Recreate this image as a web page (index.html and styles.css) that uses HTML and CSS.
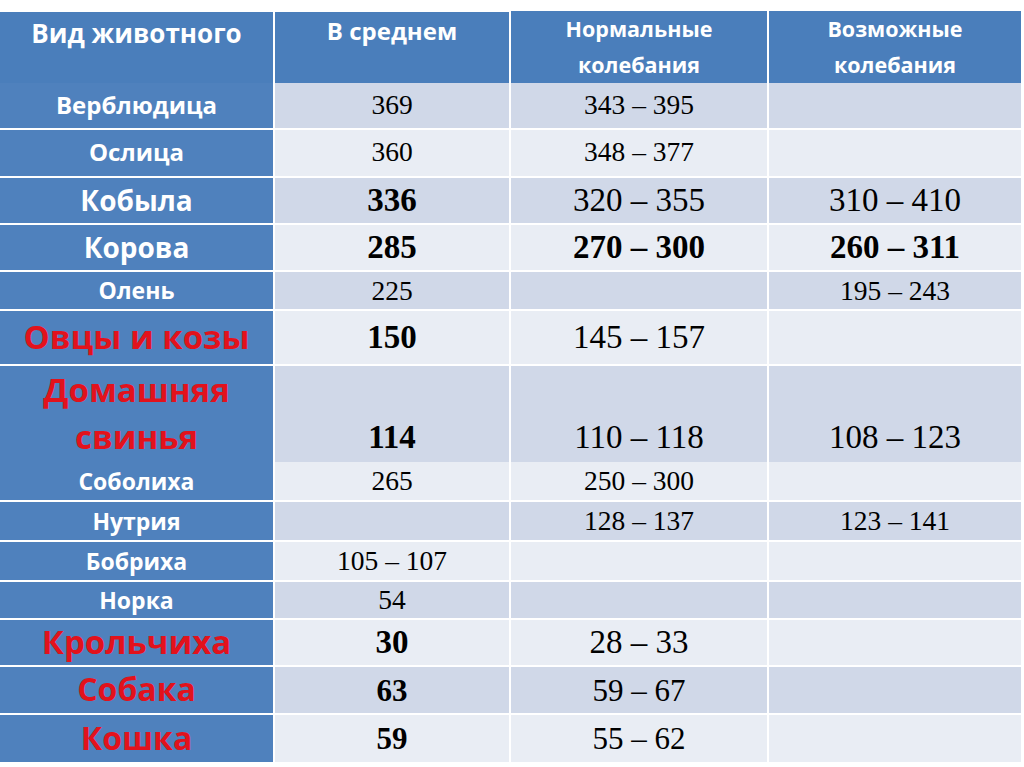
FILE: index.html
```html
<!DOCTYPE html>
<html lang="ru">
<head>
<meta charset="utf-8">
<title>Таблица</title>
<link rel="stylesheet" href="styles.css">
</head>
<body>
<div class="table">
  <div class="row head">
    <div class="cell hc hc-a">Вид животного</div>
    <div class="cell hc hc-b">В среднем</div>
    <div class="cell hc hc-c">Нормальные<br>колебания</div>
    <div class="cell hc hc-c">Возможные<br>колебания</div>
  </div>

  <div class="row h45 dark">
    <div class="cell lab s24">Верблюдица</div>
    <div class="cell num sm">369</div>
    <div class="cell num sm">343 – 395</div>
    <div class="cell num"></div>
  </div>
  <div class="row h46 light">
    <div class="cell lab s24">Ослица</div>
    <div class="cell num sm">360</div>
    <div class="cell num sm">348 – 377</div>
    <div class="cell num"></div>
  </div>
  <div class="row h45 dark">
    <div class="cell lab s28">Кобыла</div>
    <div class="cell num lg b">336</div>
    <div class="cell num lg">320 – 355</div>
    <div class="cell num lg">310 – 410</div>
  </div>
  <div class="row h45 light">
    <div class="cell lab s28">Корова</div>
    <div class="cell num lg b">285</div>
    <div class="cell num lg b">270 – 300</div>
    <div class="cell num lg b">260 – 311</div>
  </div>
  <div class="row h37 dark">
    <div class="cell lab s23">Олень</div>
    <div class="cell num sm low">225</div>
    <div class="cell num"></div>
    <div class="cell num sm low">195 – 243</div>
  </div>
  <div class="row h53 light">
    <div class="cell lab s33 red">Овцы и козы</div>
    <div class="cell num lg b">150</div>
    <div class="cell num lg">145 – 157</div>
    <div class="cell num"></div>
  </div>
  <div class="row h94 dark">
    <div class="cell lab s33 red two">Домашняя<br>свинья</div>
    <div class="cell num lg b bottom">114</div>
    <div class="cell num lg bottom">110 – 118</div>
    <div class="cell num lg bottom">108 – 123</div>
  </div>
  <div class="row h38 light">
    <div class="cell lab s23">Соболиха</div>
    <div class="cell num sm low">265</div>
    <div class="cell num sm low">250 – 300</div>
    <div class="cell num"></div>
  </div>
  <div class="row h38 dark">
    <div class="cell lab s23">Нутрия</div>
    <div class="cell num"></div>
    <div class="cell num sm low">128 – 137</div>
    <div class="cell num sm low">123 – 141</div>
  </div>
  <div class="row h38 light">
    <div class="cell lab s23">Бобриха</div>
    <div class="cell num sm low">105 – 107</div>
    <div class="cell num"></div>
    <div class="cell num"></div>
  </div>
  <div class="row h36 dark">
    <div class="cell lab s23">Норка</div>
    <div class="cell num sm low">54</div>
    <div class="cell num"></div>
    <div class="cell num"></div>
  </div>
  <div class="row h45 light">
    <div class="cell lab s33 red">Крольчиха</div>
    <div class="cell num lg b">30</div>
    <div class="cell num lg">28 – 33</div>
    <div class="cell num"></div>
  </div>
  <div class="row h46 dark">
    <div class="cell lab s32 red">Собака</div>
    <div class="cell num md b">63</div>
    <div class="cell num md">59 – 67</div>
    <div class="cell num"></div>
  </div>
  <div class="row h47 light">
    <div class="cell lab s32 red">Кошка</div>
    <div class="cell num md b">59</div>
    <div class="cell num md">55 – 62</div>
    <div class="cell num"></div>
  </div>
</div>
</body>
</html>
```

FILE: styles.css
```css
html, body {
  margin: 0;
  padding: 0;
  background: #ffffff;
}

body {
  width: 1024px;
  height: 767px;
  overflow: hidden;
}

.table {
  display: flex;
  flex-direction: column;
  gap: 2px;
  padding-top: 12px;
}

.row {
  display: grid;
  grid-template-columns: 273px 234px 256px 252px;
  column-gap: 2px;
}

.head { height: 67px; margin-bottom: 2px; }
.h36 { height: 36px; }
.h37 { height: 37px; }
.h38 { height: 38px; }
.h45 { height: 45px; }
.h46 { height: 46px; }
.h47 { height: 47px; }
.h53 { height: 53px; }
.h94 { height: 94px; }

.cell {
  display: flex;
  justify-content: center;
  align-items: center;
  text-align: center;
  white-space: nowrap;
}

/* header */
.hc {
  background: #4a7ebb;
  color: #ffffff;
  font-family: "Open Sans", sans-serif;
  font-weight: 700;
  align-items: flex-start;
}
.hc-a { font-size: 26px; line-height: 1; padding-top: 8px; }
.hc-b { font-size: 24px; line-height: 1; padding-top: 7px; }
.hc-c { font-size: 21.5px; line-height: 36px; margin-top: -1px; }

/* first column labels */
.lab {
  background: #4f81bd;
  color: #ffffff;
  font-family: "Open Sans", sans-serif;
  font-weight: 700;
  line-height: 1;
  padding-bottom: 2px;
}
.lab.red { color: #e2121c; }
.s23 { font-size: 23px; padding-bottom: 0; }
.s24 { font-size: 24px; }
.s28 { font-size: 28px; }
.s32 { font-size: 32px; }
.s33 { font-size: 33px; }
.two { line-height: 47px; }

/* data cells */
.dark .num { background: #d0d8e8; }
.light .num { background: #e9edf4; }

.num {
  color: #000000;
  font-family: "Liberation Serif", "Times New Roman", serif;
  line-height: 1;
}
.num.sm { font-size: 27.5px; padding-bottom: 2px; }
.num.sm.low { padding-bottom: 0; }
.num.lg { font-size: 33px; }
.num.md { font-size: 31px; }
.num.b { font-weight: 700; }
.num.bottom { align-items: flex-end; padding-bottom: 8px; }
```
